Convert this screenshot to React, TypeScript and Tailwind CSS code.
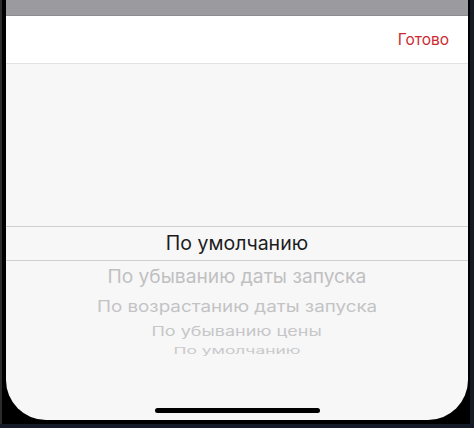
import React from 'react';

const options = [
  { label: 'По убыванию даты запуска', row: 'h-[30px]', text: 'scale-x-[0.96] scale-y-[0.93] text-[#c0c0c2]' },
  { label: 'По возрастанию даты запуска', row: 'h-[30px]', text: 'scale-x-[0.94] scale-y-[0.8] text-[#c3c3c5]' },
  { label: 'По убыванию цены', row: 'h-[20px]', text: 'scale-x-[0.9] scale-y-[0.66] text-[#c6c6c8]' },
  { label: 'По умолчанию', row: 'h-[19px]', text: 'scale-x-[0.87] scale-y-[0.47] text-[#cacacc]' },
];

export default function App() {
  return (
    <div
      className="flex h-[428px] w-[474px] overflow-hidden bg-[#151b26]"
      style={{ fontFamily: 'Inter, "Noto Sans", sans-serif' }}
    >
      <div className="flex h-[424px] w-[470px] border-l-2 border-[#2c2c2e] bg-black pl-[4px] pr-[2px] pb-[4px]">
        <div className="flex flex-1 flex-col overflow-hidden rounded-b-[40px] bg-[#f7f7f7]">
          <div className="h-[16px] border-b border-[#8c8b90] bg-[#9b9a9f]" />

          <div className="flex h-[48px] items-center justify-end border-b border-[#e2e2e4] bg-white pr-[19px]">
            <button type="button" className="text-[15.5px] text-[#cc2a31]">
              Готово
            </button>
          </div>

          <div className="h-[162px]" />

          <div className="flex h-[35px] items-center justify-center border-y border-[#d0d0d2]">
            <span className="text-[19.5px] text-[#1c1c1e]">По умолчанию</span>
          </div>

          {options.map((o, i) => (
            <div key={i} className={`flex items-center justify-center ${o.row}`}>
              <span className={`inline-block whitespace-nowrap text-[20px] leading-none ${o.text}`}>
                {o.label}
              </span>
            </div>
          ))}

          <div className="flex flex-1 items-end justify-center pb-[7px]">
            <div className="h-[5px] w-[165px] rounded-full bg-black" />
          </div>
        </div>
      </div>
    </div>
  );
}
